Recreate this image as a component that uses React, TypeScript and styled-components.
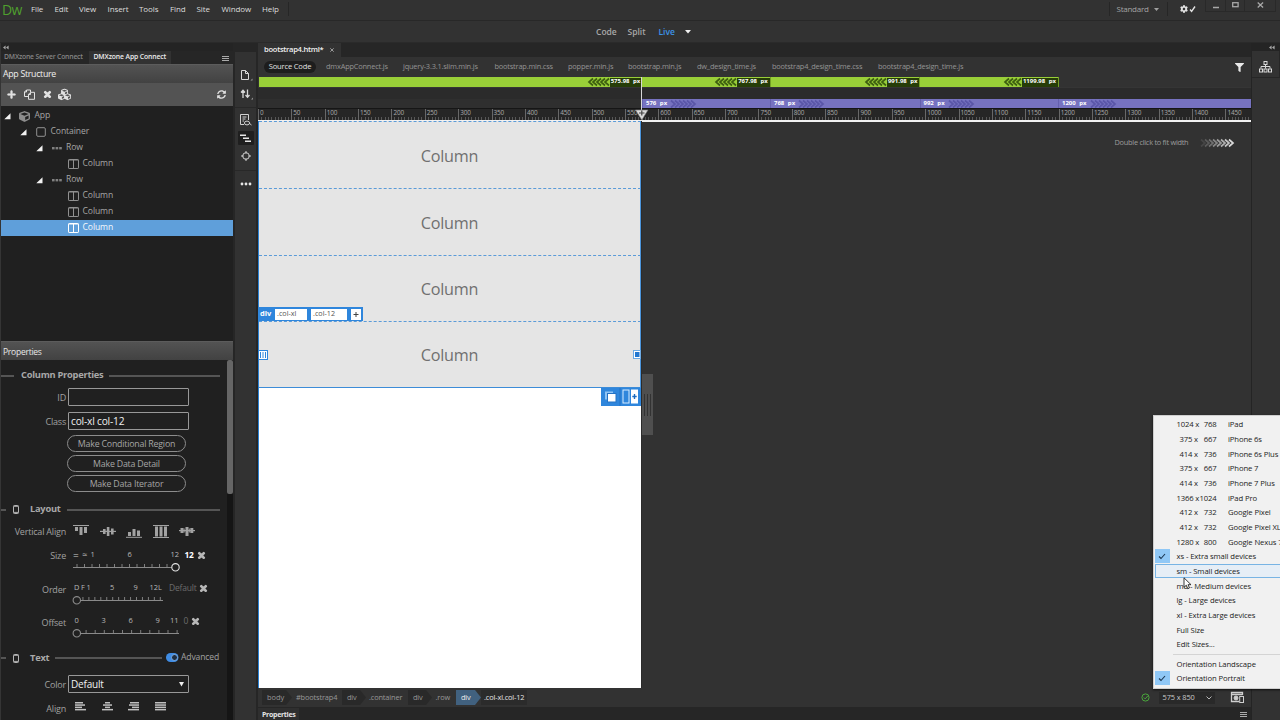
import React from "react";
import styled, { createGlobalStyle, css } from "styled-components";
import { FaCubes, FaCube, FaPlus, FaTimes, FaSyncAlt, FaFilter, FaCog } from "react-icons/fa";

const Global = createGlobalStyle`
  * { box-sizing: border-box; }
  html, body { margin: 0; padding: 0; overflow: hidden; background: #323232; }
  svg { display: block; flex: none; overflow: visible; }
`;

const Shell = styled.div`
  position: relative;
  width: 1280px;
  height: 720px;
  overflow: hidden;
  display: flex;
  flex-direction: column;
  background: #323232;
  color: #d0d0d0;
  font-family: "Open Sans", "Noto Sans", sans-serif;
  font-size: 8px;
  line-height: 1;
  white-space: nowrap;
`;

/* One run of text; $w reserves the distance to the next run. */
const Label = styled.span<{ $w?: number; $s?: number; $ls?: number; $c?: string; $b?: number; $a?: string }>`
  flex: none;
  display: block;
  ${(p) => p.$w !== undefined && css`width: ${p.$w}px;`}
  font-size: ${(p) => p.$s ?? 8}px;
  letter-spacing: ${(p) => p.$ls ?? 0}px;
  color: ${(p) => p.$c ?? "inherit"};
  font-weight: ${(p) => p.$b ?? 400};
  text-align: ${(p) => p.$a ?? "left"};
  line-height: 1.3;
`;

const Spacer = styled.div<{ $w?: number; $h?: number }>`
  flex: ${(p) => (p.$w === undefined && p.$h === undefined ? "1" : "none")};
  width: ${(p) => (p.$w === undefined ? "auto" : p.$w + "px")};
  height: ${(p) => (p.$h === undefined ? "auto" : p.$h + "px")};
`;

const MenuBar = styled.div`
  height: 21px;
  flex: none;
  display: flex;
  align-items: center;
  padding: 0 0 2px 2px;
  border-bottom: 1px solid #282828;
  color: #dcdcdc;
`;
const Logo = styled.div`
  width: 29px;
  color: #4f9f2e;
  font-size: 14px;
  letter-spacing: -0.6px;
  line-height: 17px;
`;
const Divider = styled.div`
  width: 1px;
  height: 14px;
  background: #262626;
`;
const WindowButtons = styled.div`
  display: flex;
  align-self: flex-start;
  height: 12px;
  border: 1px solid #292929;
  border-top: 0;
  margin-right: 4px;
`;
const WindowButton = styled.div<{ $w: number }>`
  width: ${(p) => p.$w}px;
  display: flex;
  align-items: center;
  justify-content: center;
  padding-bottom: 1px;
  & + & { border-left: 1px solid #292929; }
`;
const ViewBar = styled.div`
  height: 22px;
  flex: none;
  display: flex;
  align-items: center;
  padding-left: 596px;
  border-bottom: 1px solid #2a2a2a;
`;
const Main = styled.div`
  flex: 1;
  min-height: 0;
  display: flex;
`;

/* left panel */
const Panel = styled.div`
  width: 233px;
  flex: none;
  display: flex;
  flex-direction: column;
  background: #202020;
  border-left: 1px solid #353535;
`;
const Collapse = styled.div<{ $right?: boolean }>`
  height: 8px;
  flex: none;
  display: flex;
  align-items: center;
  justify-content: ${(p) => (p.$right ? "flex-end" : "flex-start")};
  padding: 0 5px 0 2px;
  background: #242424;
`;
const PanelTabs = styled.div`
  height: 13px;
  flex: none;
  display: flex;
  background: #262626;
  align-items: center;
`;
const PanelTab = styled.div<{ $active?: boolean; $w: number }>`
  width: ${(p) => p.$w}px;
  height: 13px;
  display: flex;
  align-items: center;
  padding-left: ${(p) => (p.$active ? 4.500 : 3)}px;
  background: ${(p) => (p.$active ? "#323232" : "transparent")};
`;
const PanelTitle = styled.div`
  height: 19px;
  flex: none;
  display: flex;
  align-items: center;
  padding: 1px 0 0 2px;
  background: linear-gradient(#535353, #424242);
  border-top: 1px solid #5c5c5c;
`;
const PanelTools = styled.div`
  height: 23px;
  flex: none;
  display: flex;
  align-items: center;
  padding: 0 7px 0 6px;
  background: #535353;
  color: #e2e2e2;
`;
const Tree = styled.div`
  height: 235px;
  flex: none;
  padding-top: 2px;
`;
const TreeRow = styled.div<{ $depth: number; $sel?: boolean }>`
  height: 16px;
  display: flex;
  align-items: center;
  padding-left: ${(p) => 3 + p.$depth * 16}px;
  background: ${(p) => (p.$sel ? "#5f9fda" : "transparent")};
  color: ${(p) => (p.$sel ? "#f4f8fc" : "#a6a6a6")};
`;
const Properties = styled.div`
  flex: 1;
  min-height: 0;
  display: flex;
`;
const PropList = styled.div`
  width: 226px;
  overflow: hidden;
  display: flex;
  flex-direction: column;
`;
const ScrollTrack = styled.div`
  width: 6px;
  background: #151515;
`;
const ScrollThumb = styled.div`
  height: 134px;
  border-radius: 2px;
  background: #666;
`;
const SectionRow = styled.div<{ $h: number; $t?: number }>`
  height: ${(p) => p.$h}px;
  padding-top: ${(p) => p.$t ?? 0}px;
  flex: none;
  display: flex;
  align-items: center;
`;
const Rule = styled.div<{ $w: number }>`
  width: ${(p) => p.$w}px;
  height: 2px;
  background: #555;
`;
const PropRow = styled.div<{ $h: number }>`
  height: ${(p) => p.$h}px;
  flex: none;
  display: flex;
  align-items: center;
`;
const PropLabel = styled.div`
  width: 65px;
  margin-right: 2px;
  text-align: right;
  font-size: 9px;
  letter-spacing: -0.2px;
  color: #a0a0a0;
  flex: none;
`;
const Field = styled.div`
  width: 121px;
  height: 18px;
  border: 1px solid #989898;
  border-radius: 1px;
  display: flex;
  align-items: center;
  justify-content: space-between;
  padding: 1px 4px 0 2px;
  color: #f0f0f0;
`;
const PillButton = styled.div`
  width: 119px;
  height: 17px;
  margin: 0 0 3px 66px;
  flex: none;
  border: 1px solid #8c8c8c;
  border-radius: 9px;
  display: flex;
  align-items: center;
  justify-content: center;
  color: #a6a6a6;
  padding-top: 2px;
`;
const ScaleBox = styled.div`
  display: flex;
  flex-direction: column;
  gap: 1px;
  color: #b8b8b8;
`;
const ScaleLabels = styled.div`
  display: flex;
  align-items: center;
  height: 11px;
`;

/* vertical tool rail */
const Rail = styled.div`
  width: 25px;
  flex: none;
  padding: 9px 2px 0 2px;
  background: #262626;
`;
const RailInner = styled.div`
  height: 100%;
  background: #323232;
  display: flex;
  flex-direction: column;
  align-items: center;
  padding-top: 15px;
  color: #d8d8d8;
`;
const RailTool = styled.div<{ $h: number; $active?: boolean }>`
  width: 16px;
  height: ${(p) => p.$h}px;
  flex: none;
  display: flex;
  align-items: center;
  justify-content: center;
  border-radius: 1px;
  background: ${(p) => (p.$active ? "#1f1f1f" : "transparent")};
`;
const RailLine = styled.div`
  width: 100%;
  height: 1px;
  background: #282828;
`;

/* document */
const Doc = styled.div`
  width: 993px;
  flex: none;
  display: flex;
  flex-direction: column;
`;
const DocTabs = styled.div`
  height: 14px;
  flex: none;
  background: #262626;
`;
const DocTab = styled.div`
  width: 83px;
  height: 14px;
  background: #323232;
  display: flex;
  align-items: center;
  padding-left: 6px;
`;
const FilesBar = styled.div`
  height: 20px;
  flex: none;
  display: flex;
  align-items: center;
  color: #949494;
  padding-left: 6px;
`;
const SourcePill = styled.div`
  width: 52px;
  height: 12px;
  border-radius: 6px;
  background: #1d1d1d;
  color: #e2e2e2;
  display: flex;
  align-items: center;
  justify-content: center;
  margin-right: 10px;
`;
const MaxBar = styled.div`
  height: 10px;
  flex: none;
  display: flex;
  padding-left: 1px;
`;
const MaxSegment = styled.div<{ $w: number }>`
  width: ${(p) => p.$w}px;
  height: 10px;
  display: flex;
  align-items: center;
  justify-content: flex-end;
  background: #99cf38;
  border-right: 1px solid #73a024;
`;
const MaxLabel = styled.div<{ $w: number }>`
  width: ${(p) => p.$w}px;
  height: 9px;
  background: #263d08;
  color: #fff;
  display: flex;
  align-items: center;
  justify-content: center;
  word-spacing: 2px;
`;
const GapBar = styled.div`
  height: 12px;
  flex: none;
  background: #2b2b2b;
  border-top: 1px solid #353535;
`;
const MinBar = styled.div`
  height: 9px;
  flex: none;
  display: flex;
  padding-left: 384px;
  background: #2f2f2f;
`;
const MinSegment = styled.div<{ $w: number }>`
  width: ${(p) => p.$w}px;
  display: flex;
  align-items: center;
  background: #7672c0;
  border-left: 1px solid #6460ae;
  color: #fff;
  padding-left: 3px;
  word-spacing: 2px;
`;
const Ruler = styled.div`
  height: 12px;
  flex: none;
  display: flex;
  overflow: hidden;
  background: #262626;
  border-top: 1px solid #161616;
`;
const RulerCell = styled.div`
  width: 33.36px;
  height: 11px;
  flex: none;
  border-left: 1px solid #686868;
  padding-left: 1px;
  color: #aaa;
  background: repeating-linear-gradient(to right, #585858 0 1px, transparent 1px 3.336px) -1px 8px / 100% 3px no-repeat;
  & > span { line-height: 7px; }
`;
const RulerLine = styled.div`
  height: 1px;
  flex: none;
  background: #f2f2f2;
`;
const Stage = styled.div`
  flex: 1;
  min-height: 0;
  display: flex;
`;
const StageRest = styled.div`
  flex: 1;
  display: flex;
  align-items: flex-start;
  border-top: 1px solid #f2f2f2;
`;
const PageView = styled.div`
  position: relative;
  width: 384px;
  height: 567px;
  background: #fff;
  border-left: 1px solid #2b83d6;
  border-right: 1px solid #2b2b2b;
`;
const Block = styled.div<{ $h: number; $sel?: boolean }>`
  height: ${(p) => p.$h}px;
  padding-top: 3px;
  background: #e5e5e5;
  border-top: 1px dashed #5b9bd8;
  border-right: 1px solid #4c95dc;
  ${(p) => p.$sel && css`border-bottom: 1px solid #3d8cd8;`}
  display: flex;
  align-items: center;
  justify-content: center;
  color: #707070;
`;
const TagBadge = styled.div`
  position: absolute;
  left: -1px;
  top: 186px;
  width: 105px;
  height: 14px;
  padding: 0 2px;
  background: #2f86dc;
  display: flex;
  align-items: center;
  color: #fff;
`;
const TagChip = styled.div<{ $w: number; $m: number }>`
  width: ${(p) => p.$w}px;
  height: 11px;
  margin-right: ${(p) => p.$m}px;
  background: #fff;
  color: #555;
  display: flex;
  align-items: center;
  padding-left: 2px;
`;
const Handle = styled.div<{ $x: number }>`
  position: absolute;
  left: ${(p) => p.$x}px;
  top: 229px;
`;
const ActionBadge = styled.div`
  position: absolute;
  left: 342px;
  top: 267px;
`;
const DragGrip = styled.div`
  width: 11px;
  height: 61px;
  margin-top: 252px;
  background: #4f4f4f;
  display: flex;
  align-items: center;
  justify-content: center;
  gap: 2px;
`;
const GripLine = styled.div`
  width: 1px;
  height: 22px;
  background: #333;
`;
const Hint = styled.div`
  margin: 14px 17px 0 auto;
  height: 14px;
  display: flex;
  align-items: center;
  color: #9c9c9c;
`;
const Crumbs = styled.div`
  height: 20px;
  flex: none;
  display: flex;
  align-items: center;
  padding-left: 4px;
  color: #989898;
  border-bottom: 1px solid #262626;
`;
const Crumb = styled.div<{ $w: number; $bg?: string; $arrow?: boolean; $c?: string; $p?: number }>`
  width: ${(p) => p.$w}px;
  height: 15px;
  flex: none;
  display: flex;
  align-items: center;
  padding-left: ${(p) => p.$p ?? 5}px;
  background: ${(p) => p.$bg ?? "transparent"};
  color: ${(p) => p.$c ?? "inherit"};
  ${(p) => p.$arrow && css`clip-path: polygon(0 0, calc(100% - 6px) 0, 100% 50%, calc(100% - 6px) 100%, 0 100%);`}
`;
const SizeSelect = styled.div`
  width: 56px;
  height: 12px;
  background: #292929;
  color: #c9c9c9;
  display: flex;
  align-items: center;
  justify-content: space-between;
  padding: 0 3px 0 4px;
  margin-right: 16px;
`;
const BottomPanel = styled.div`
  height: 12px;
  flex: none;
  background: #262626;
  display: flex;
  align-items: center;
  justify-content: space-between;
  padding-right: 4px;
`;
const BottomTab = styled.div`
  width: 41px;
  height: 12px;
  background: #2f2f2f;
  padding: 2px 0 0 4px;
`;

const RightRail = styled.div`
  flex: 1;
  border-left: 1px solid #242424;
  display: flex;
  flex-direction: column;
`;
const RightTool = styled.div`
  height: 27px;
  display: flex;
  align-items: center;
  justify-content: center;
  border-bottom: 1px solid #262626;
  border-right: 1px solid #262626;
  padding-top: 5px;
`;

/* size menu */
const Menu = styled.div`
  position: absolute;
  left: 1153px;
  top: 415px;
  width: 140px;
  height: 274px;
  padding: 1px 0 0 1px;
  background: #f1f1f1;
  border: 1px solid #cfcfcf;
  box-shadow: 0 1px 2px #111;
  color: #1c1c1c;
`;
const MenuItem = styled.div<{ $hover?: boolean }>`
  height: 14.67px;
  display: flex;
  align-items: center;
  background: ${(p) => (p.$hover ? "#e6eef6" : "transparent")};
  outline: ${(p) => (p.$hover ? "1px solid #78b4e4" : "none")};
  outline-offset: -1px;
`;
const CheckCell = styled.div<{ $on?: boolean }>`
  width: 14.500px;
  height: 14px;
  margin-right: 7px;
  display: flex;
  align-items: center;
  justify-content: center;
  background: ${(p) => (p.$on ? "#90c8f6" : "transparent")};
`;
const MenuLine = styled.div`
  height: 1px;
  margin: 2px 0 2px 18px;
  background: #d4d4d4;
`;
const Pointer = styled.div`
  position: absolute;
  left: 1183px;
  top: 577px;
`;
const MarkerBox = styled.div`
  position: absolute;
  left: 635px;
  top: 77px;
`;

const Hamburger = () => (
  <svg width="7" height="6"><path d="M0 1.500h7M0 3.500h7M0 5.500h7" stroke="#aaa" strokeWidth="1" /></svg>
);
const DoubleLeft = () => (
  <svg width="6" height="5" fill="#a8a8a8"><path d="M2.600 .5v4L0 2.500zM5.600 .5v4L3 2.500z" /></svg>
);
const Expander = () => (
  <svg width="7" height="7"><path d="M6.500 .2v6H.3z" fill="#f2f2f2" /></svg>
);
const Chevrons = ({ n, left, color, fade, h = 8, step = 4 }: { n: number; left?: boolean; color: string; fade?: boolean; h?: number; step?: number }) => (
  <svg width={n * step + 2} height={h} fill="none" stroke={color} strokeWidth="1.700">
    {Array.from({ length: n }, (_, i) => (
      <path
        key={i}
        opacity={fade ? (i + 1) / n : 1}
        d={left ? `M${i * step + 5} .5L${i * step + 1} ${h / 2}l4 ${h / 2 - 0.5}` : `M${i * step + 1} .5l4 ${h / 2 - 0.5}l-4 ${h / 2 - 0.5}`}
      />
    ))}
  </svg>
);
const Phone = () => (
  <svg width="6" height="9" fill="none" stroke="#b4b4b4"><rect x=".5" y=".5" width="5" height="8" rx=".8" /><path d="M1 1.300h4M1 7.400h4" /></svg>
);
const ColumnIcon = ({ c }: { c: string }) => (
  <svg width="11" height="10" fill="none" stroke={c}><rect x=".5" y=".5" width="10" height="9" rx=".6" /><path d="M5.500 .5v9" /><path d="M.5 1.500h10" strokeOpacity=".5" /></svg>
);
const ClearIcon = () => <FaTimes size={9} color="#b8b8b8" stroke="#b8b8b8" strokeWidth={60} />;

const menus: [string, number][] = [["File", 23.5], ["Edit", 24.5], ["View", 28.5], ["Insert", 31.5], ["Tools", 31], ["Find", 26.5], ["Site", 25], ["Window", 40.5], ["Help", 26]];

const files: [string, number][] = [
  ["dmxAppConnect.js", 77], ["jquery-3.3.1.slim.min.js", 91.5], ["bootstrap.min.css", 73.5], ["popper.min.js", 60],
  ["bootstrap.min.js", 69], ["dw_design_time.js", 75], ["bootstrap4_design_time.css", 106], ["bootstrap4_design_time.js", 90],
];

type Kind = "app" | "container" | "row" | "col";
const tree: [Kind, string, number, boolean?][] = [
  ["app", "App", 0], ["container", "Container", 1], ["row", "Row", 2], ["col", "Column", 3],
  ["row", "Row", 2], ["col", "Column", 3], ["col", "Column", 3], ["col", "Column", 3, true],
];

const TreeIcon = ({ kind, sel }: { kind: Kind; sel?: boolean }) => {
  if (kind === "app") return <FaCube size={11} color="#8c8c8c" />;
  if (kind === "container") return <svg width="10" height="10" fill="none" stroke="#909090"><rect x=".7" y=".7" width="8.600" height="8.600" rx="1.200" /></svg>;
  if (kind === "row") return <svg width="10" height="4" fill="#808080"><rect x="0" y="1" width="2.600" height="2.400" /><rect x="3.600" y="1" width="2.600" height="2.400" /><rect x="7.200" y="1" width="2.600" height="2.400" /></svg>;
  return <ColumnIcon c={sel ? "#fff" : "#909090"} />;
};

const Slider = ({ w, step, first, count, knob, bright }: { w: number; step: number; first: number; count: number; knob: number; bright?: boolean }) => (
  <svg width={w + 6} height="10" fill="none" stroke="#8a8a8a">
    <path d={`M0 5.500H${w}`} />
    {Array.from({ length: count }, (_, i) => <path key={i} d={`M${first + i * step} 2v3`} strokeWidth=".9" />)}
    <circle cx={knob} cy="5.300" r="3.700" fill="#202020" stroke={bright ? "#e4e4e4" : "#8a8a8a"} strokeWidth="1.100" />
  </svg>
);

/* Vertical alignment glyphs: [x, y, width, height] bars on a 16x13 grid. */
const vAligns: number[][][] = [
  [[0, 0, 16, 1], [2, 2, 3, 4], [6.5, 2, 3, 8], [11, 2, 3, 6]],
  [[0, 5.8, 16, 1.2], [3, 4, 2.6, 5], [6.8, 2, 2.6, 9], [11, 3.5, 2.6, 6]],
  [[0, 11.8, 16, 1], [2, 7, 3, 4], [6.5, 4, 3, 7], [11, 5.5, 3, 5.5]],
  [[0, 0, 16, 1], [2, 1.5, 3, 10], [6.5, 1.5, 3, 10], [11, 1.5, 3, 10], [0, 12, 16, 1]],
  [[0, 5, 16, 1.2], [1.5, 3, 3, 5], [6.5, 2, 3, 9], [11.3, 3, 3, 5], [4.6, 3.5, 1, 4], [9.8, 3.5, 1, 4]],
];

/* Text alignment glyphs: [x, width] of each of the four lines. */
const aligns = [[[0, 8], [0, 10], [0, 7], [0, 11]], [[3, 5], [1, 9], [3, 5], [0, 11]], [[2, 9], [1, 10], [4, 7], [0, 11]], [[0, 11], [0, 11], [0, 11], [0, 11]]];

const devices: [string, string, string][] = [
  ["1024 x", "768", "iPad"], ["375 x", "667", "iPhone 6s"], ["414 x", "736", "iPhone 6s Plus"], ["375 x", "667", "iPhone 7"],
  ["414 x", "736", "iPhone 7 Plus"], ["1366 x", "1024", "iPad Pro"], ["412 x", "732", "Google Pixel"], ["412 x", "732", "Google Pixel XL"], ["1280 x", "800", "Google Nexus 7"],
];
const sizes = ["xs - Extra small devices", "sm - Small devices", "md - Medium devices", "lg - Large devices", "xl - Extra Large devices", "Full Size", "Edit Sizes..."];
const Tick = () => <svg width="8" height="7" fill="none" stroke="#1a3550" strokeWidth="1.100"><path d="M1 3.500l2 2L7 1" /></svg>;

function Marker() {
  return (
    <MarkerBox>
      <svg width="14" height="44">
        <path d="M6.500 0v34" stroke="#d8d8d8" />
        <path d="M.5 33h12.500L6.800 43z" fill="#dcdcdc" stroke="#777" strokeWidth=".6" />
        <path d="M4 36h5.500M6.800 33.500v5" stroke="#444" strokeWidth="1.200" />
      </svg>
    </MarkerBox>
  );
}

export default function App() {
  return (
    <Shell>
      <Global />
      <MenuBar>
        <Logo>Dw</Logo>
        {menus.map(([t, w]) => <Label key={t} $w={w} $s={8} $ls={-0.1}>{t}</Label>)}
        <Divider />
        <Spacer />
        <Divider />
        <Spacer $w={7} />
        <Label $w={37.5} $ls={-0.25} $c="#a4a4a4">Standard</Label>
        <svg width="5" height="3" fill="#a0a0a0"><path d="M0 0h5L2.500 3z" /></svg>
        <Spacer $w={8} />
        <Divider />
        <Spacer $w={12} />
        <FaCog size={8} color="#e2e2e2" />
        <svg width="8" height="8" fill="none" stroke="#e2e2e2" strokeWidth="1.400"><path d="M2 4.500l1.600 1.800L7 1.500" /></svg>
        <Spacer $w={9} />
        <WindowButtons>
          <WindowButton $w={19}><svg width="8" height="8"><path d="M1 6.500h6" stroke="#a8a8a8" strokeWidth="1.500" /></svg></WindowButton>
          <WindowButton $w={19}><svg width="7" height="6" fill="none" stroke="#a8a8a8" strokeWidth="1.300"><rect x=".7" y=".7" width="5.400" height="4" /></svg></WindowButton>
          <WindowButton $w={31}><svg width="7" height="6" stroke="#a8a8a8" strokeWidth="1.300"><path d="M.7 .5l5.400 5M6.100 .5l-5.400 5" /></svg></WindowButton>
        </WindowButtons>
      </MenuBar>
      <ViewBar>
        <Label $w={31.5} $s={8.5} $b={600} $c="#a8a8a8">Code</Label>
        <Label $w={31} $s={8.5} $b={600} $c="#a8a8a8">Split</Label>
        <Label $w={26} $s={8.5} $b={600} $c="#3d94e8">Live</Label>
        <svg width="6" height="4" fill="#f0f0f0"><path d="M0 0h6L3 3.600z" /></svg>
      </ViewBar>
      <Main>
        <Panel>
          <Collapse><DoubleLeft /></Collapse>
          <PanelTabs>
            <PanelTab $w={88}><Label $s={6.8} $b={600} $ls={-0.18} $c="#858585">DMXzone Server Connect</Label></PanelTab>
            <PanelTab $w={82} $active><Label $s={6.8} $b={600} $ls={-0.11} $c="#ececec">DMXzone App Connect</Label></PanelTab>
            <Spacer />
            <Hamburger />
            <Spacer $w={4} />
          </PanelTabs>
          <PanelTitle><Label $s={8.8} $ls={-0.3} $c="#f0f0f0">App Structure</Label></PanelTitle>
          <PanelTools>
            <FaPlus size={9} stroke="#e2e2e2" strokeWidth={30} />
            <Spacer $w={8} />
            <svg width="11" height="11" fill="none" stroke="#e2e2e2" strokeWidth="1"><path d="M4.500 7.500h-4v-4.500l2-2h4v2M.5 3h2v-2M4.500 5.300l2-2h4v7h-6zM4.500 5.500h2v-2" /></svg>
            <Spacer $w={8} />
            <FaTimes size={9} stroke="#e2e2e2" strokeWidth={60} />
            <Spacer $w={6} />
            <FaCubes size={13} />
            <Spacer />
            <FaSyncAlt size={9} />
          </PanelTools>
          <Tree>
            {tree.map(([k, t, d, sel], i) => (
              <TreeRow key={i} $depth={d} $sel={sel}>
                {k === "col" ? <Spacer $w={16} /> : <><Expander /><Spacer $w={k === "app" ? 8 : 9} /></>}
                <TreeIcon kind={k} sel={sel} />
                <Spacer $w={k === "app" || k === "container" ? 4.5 : k === "row" ? 4 : 3.5} />
                <Label $s={8.6} $ls={-0.1}>{t}</Label>
              </TreeRow>
            ))}
          </Tree>
          <PanelTitle><Label $s={8.5} $ls={-0.25} $c="#e8e8e8">Properties</Label></PanelTitle>
          <Properties>
            <PropList>
              <SectionRow $h={28} $t={3}>
                <Rule $w={13} /><Spacer $w={7} />
                <Label $w={88} $s={9.3} $b={700} $ls={-0.25} $c="#a8a8a8">Column Properties</Label>
                <Rule $w={111} />
              </SectionRow>
              <PropRow $h={18}><PropLabel>ID</PropLabel><Field /></PropRow>
              <Spacer $h={6} />
              <PropRow $h={18}><PropLabel>Class</PropLabel><Field><Label $s={10.2} $ls={-0.2}>col-xl col-12</Label></Field></PropRow>
              <Spacer $h={5} />
              <PillButton><Label $s={8.8} $ls={-0.2}>Make Conditional Region</Label></PillButton>
              <PillButton><Label $s={8.8} $ls={-0.2}>Make Data Detail</Label></PillButton>
              <PillButton><Label $s={8.8} $ls={-0.2}>Make Data Iterator</Label></PillButton>
              <SectionRow $h={28} $t={1}>
                <Rule $w={5} /><Spacer $w={7} /><Phone /><Spacer $w={11} />
                <Label $w={37} $s={9.3} $b={700} $ls={-0.25} $c="#a8a8a8">Layout</Label>
                <Rule $w={153} />
              </SectionRow>
              <PropRow $h={16}>
                <PropLabel>Vertical Align</PropLabel>
                <Spacer $w={5} />
                {vAligns.map((bars, i) => (
                  <React.Fragment key={i}>
                    <svg width="16" height="13" fill="#a2a2a2">{bars.map(([x, y, w, h], j) => <rect key={j} x={x} y={y} width={w} height={h} />)}</svg>
                    <Spacer $w={10.6} />
                  </React.Fragment>
                ))}
              </PropRow>
              <Spacer $h={10} />
              <PropRow $h={23}>
                <PropLabel>Size<Spacer $h={10} /></PropLabel>
                <Spacer $w={5} />
                <ScaleBox>
                  <ScaleLabels>
                    <Label $w={9} $s={10} $c="#ccc">=</Label><Label $w={8.5} $s={9}>≈</Label><Label $w={37} $s={7.5}>1</Label>
                    <Label $w={43} $s={7.5}>6</Label><Label $w={14} $s={7.5}>12</Label>
                    <Label $w={12} $s={8.4} $b={700} $c="#fff" $ls={-0.3}>12</Label>
                    <ClearIcon />
                  </ScaleLabels>
                  <Slider w={99} step={7.5} first={4} count={13} knob={102.5} bright />
                </ScaleBox>
              </PropRow>
              <Spacer $h={10} />
              <PropRow $h={23}>
                <PropLabel>Order<Spacer $h={9} /></PropLabel>
                <Spacer $w={5} />
                <ScaleBox>
                  <ScaleLabels>
                    <Spacer $w={1} />
                    <Label $w={7} $s={7.4}>D</Label><Label $w={5.5} $s={7.4}>F</Label><Label $w={23.5} $s={7.4}>1</Label>
                    <Label $w={23.5} $s={7.4}>5</Label><Label $w={16} $s={7.4}>9</Label><Label $w={19.5} $s={7.4}>12L</Label>
                    <Label $w={30} $s={8.5} $ls={-0.2} $c="#6c6c6c">Default</Label>
                    <ClearIcon />
                  </ScaleLabels>
                  <Slider w={90} step={5.95} first={4} count={15} knob={3.8} />
                </ScaleBox>
              </PropRow>
              <Spacer $h={10} />
              <PropRow $h={23}>
                <PropLabel>Offset<Spacer $h={9} /></PropLabel>
                <Spacer $w={5} />
                <ScaleBox>
                  <ScaleLabels>
                    <Spacer $w={1.5} />
                    <Label $w={27} $s={7.5}>0</Label><Label $w={27} $s={7.5}>3</Label><Label $w={27} $s={7.5}>6</Label>
                    <Label $w={14.5} $s={7.5}>9</Label><Label $w={13.5} $s={7.5}>11</Label>
                    <Label $w={7.5} $s={8.5} $c="#6c6c6c">0</Label>
                    <ClearIcon />
                  </ScaleLabels>
                  <Slider w={106} step={9.1} first={4} count={12} knob={3.8} />
                </ScaleBox>
              </PropRow>
              <Spacer $h={5} />
              <SectionRow $h={30}>
                <Rule $w={5} /><Spacer $w={7} /><Phone /><Spacer $w={11} />
                <Label $w={25} $s={9.3} $b={700} $ls={-0.25} $c="#a8a8a8">Text</Label>
                <Rule $w={107} />
                <Spacer $w={4} />
                <svg width="13" height="10"><rect x="0" y="0" width="12.500" height="9" rx="4.500" fill="#3f8ce4" /><circle cx="8.500" cy="4.500" r="3" fill="#1f2f42" stroke="#8fbcf0" strokeWidth=".8" /></svg>
                <Spacer $w={2} />
                <Label $s={8.6} $ls={-0.15} $c="#a2a2a2">Advanced</Label>
              </SectionRow>
              <Spacer $h={2} />
              <PropRow $h={18}><PropLabel>Color</PropLabel><Field><Label $s={10} $ls={-0.2}>Default</Label><svg width="5" height="5" fill="#eee"><path d="M0 0h5L2.500 4.500z" /></svg></Field></PropRow>
              <Spacer $h={6} />
              <PropRow $h={14}>
                <PropLabel><Spacer $h={4} />Align</PropLabel>
                <Spacer $w={7} />
                {aligns.map((rows, i) => (
                  <React.Fragment key={i}>
                    <svg width="11" height="9" fill="#c0c0c0">{rows.map(([x, w], j) => <rect key={j} x={x} y={j * 2.3} width={w} height="1.500" />)}</svg>
                    <Spacer $w={15.7} />
                  </React.Fragment>
                ))}
              </PropRow>
            </PropList>
            <ScrollTrack><ScrollThumb /></ScrollTrack>
          </Properties>
        </Panel>
        <Rail>
          <RailInner>
            <RailTool $h={16}><svg width="11" height="10" fill="none" stroke="#d8d8d8"><path d="M1.500 .5h4l3 3v6h-7zM5.500 .5v3h3" /><path d="M12.500 8.500v2h-2z" fill="#999" stroke="none" /></svg></RailTool>
            <Spacer $h={3} />
            <RailTool $h={16}><svg width="12" height="10" fill="none" stroke="#d8d8d8" strokeWidth="1.300"><path d="M3 9V1.500M1 3.500l2-2.200 2 2.200M7.500 .5V8M5.500 6l2 2.200 2-2.200" /><path d="M13 8.500v2h-2z" fill="#999" stroke="none" /></svg></RailTool>
            <Spacer $h={5} /><RailLine /><Spacer $h={4} />
            <RailTool $h={16}><svg width="13" height="12" fill="none" stroke="#d0d0d0"><path d="M5 10.500H1.500V.5h8V6M3.500 3h4M3.500 5h3M3.500 7h1.500" /><ellipse cx="8" cy="9" rx="2.600" ry="1.900" /><path d="M10 9l2.500 2" /></svg></RailTool>
            <Spacer $h={3} />
            <RailTool $h={14} $active><svg width="11" height="9" stroke="#e6e6e6" strokeWidth="1.500"><path d="M0 1.200h6M3 4.200h6M5 7.200h6" /></svg></RailTool>
            <Spacer $h={4} />
            <RailTool $h={14}><svg width="10" height="10" fill="none" stroke="#d0d0d0"><circle cx="5" cy="5" r="3.300" /><path d="M5 0v2.500M5 7.500V10M0 5h2.500M7.500 5H10" /></svg></RailTool>
            <Spacer $h={7} /><RailLine /><Spacer $h={5} />
            <RailTool $h={16}><svg width="12" height="4" fill="#e8e8e8"><circle cx="2" cy="2" r="1.400" /><circle cx="6" cy="2" r="1.400" /><circle cx="10" cy="2" r="1.400" /></svg></RailTool>
          </RailInner>
        </Rail>
        <Doc>
          <DocTabs>
            <DocTab>
              <Label $w={65.5} $s={7.6} $b={600} $c="#f0f0f0" $ls={-0.28}>bootstrap4.html*</Label>
              <svg width="4" height="4" stroke="#9a9a9a"><path d="M.3 .3l3.400 3.400M3.700 .3L.3 3.700" /></svg>
            </DocTab>
          </DocTabs>
          <FilesBar>
            <SourcePill><Label $s={7.6} $ls={-0.2}>Source Code</Label></SourcePill>
            {files.map(([f, w]) => <Label key={f} $w={w} $s={7.4} $ls={-0.19}>{f}</Label>)}
            <Spacer />
            <FaFilter size={9} color="#e8e8e8" />
            <Spacer $w={7.5} />
          </FilesBar>
          <MaxBar>
            {([[383, 31, "575.98 px", 5], [128.5, 33, "767.98 px", 5], [149.5, 32.5, "991.98 px", 5], [138.5, 36, "1199.98 px", 4]] as [number, number, string, number][]).map(([w, lw, t, n]) => (
              <MaxSegment key={t} $w={w}>
                <Chevrons n={n} left color="#3d5f10" />
                <MaxLabel $w={lw}><Label $s={6} $b={700}>{t}</Label></MaxLabel>
              </MaxSegment>
            ))}
          </MaxBar>
          <GapBar />
          <MinBar>
            {([[128, "576 px"], [149.5, "768 px"], [138.5, "992 px"], [193, "1200 px"]] as [number, string][]).map(([w, t]) => (
              <MinSegment key={t} $w={w}><Label $s={6} $b={700}>{t}</Label><Spacer $w={3} /><Chevrons n={6} color="#5a56a8" /></MinSegment>
            ))}
          </MinBar>
          <Ruler>
            {Array.from({ length: 30 }, (_, i) => <RulerCell key={i}><Label $s={6.4} $ls={-0.15}>{i * 50}</Label></RulerCell>)}
          </Ruler>
          <RulerLine />
          <Stage>
            <PageView>
              {[67, 66.5, 66.5].map((h, i) => <Block key={i} $h={h}><Label $s={16.2} $ls={-0.2}>Column</Label></Block>)}
              <Block $h={67} $sel><Label $s={16.2} $ls={-0.2}>Column</Label></Block>
              <TagBadge>
                <Label $w={15} $s={7.5} $b={700}>div</Label>
                <TagChip $w={32} $m={4}><Label $s={7.2}>.col-xl</Label></TagChip>
                <TagChip $w={36} $m={4}><Label $s={7.2}>.col-12</Label></TagChip>
                <TagChip $w={10} $m={0}><svg width="6" height="7" stroke="#444"><path d="M3 1v5M.5 3.500h5" /></svg></TagChip>
              </TagBadge>
              <Handle $x={-1}><svg width="10" height="10" stroke="#2f86dc"><rect x=".5" y=".5" width="9" height="9" fill="#fff" /><path d="M2.500 2v6M5 2v6M7.500 2v6" /></svg></Handle>
              <Handle $x={374}><svg width="8" height="9"><rect x=".5" y=".5" width="7" height="8" fill="#fff" stroke="#6caae4" /><rect x="2" y="2" width="4.500" height="5" fill="#2277d0" /></svg></Handle>
              <ActionBadge>
                <svg width="40" height="18">
                  <rect width="40" height="18" fill="#2f86dc" />
                  <rect x="4" y="3.500" width="8" height="8" fill="#8ec3f4" />
                  <rect x="6.500" y="5.500" width="8.500" height="8.500" fill="#fff" stroke="#2472c4" />
                  <path d="M19 0v18" stroke="#2472c4" />
                  <rect x="22" y="2" width="6" height="13" fill="#2f86dc" stroke="#d8ecff" />
                  <rect x="30" y="1.500" width="7" height="14" fill="#fff" />
                  <path d="M33.500 6v5M31.300 8.500h4.400" stroke="#1d6cc0" strokeWidth="1.400" />
                </svg>
              </ActionBadge>
            </PageView>
            <StageRest>
              <DragGrip><GripLine /><GripLine /><GripLine /></DragGrip>
              <Hint><Label $w={85.5} $s={7.4} $ls={-0.27}>Double click to fit width</Label><Chevrons n={8} color="#d8d8d8" fade /></Hint>
            </StageRest>
          </Stage>
          <Crumbs>
            <Crumb $w={30} $bg="#292929" $arrow><Label $s={7.4}>body</Label></Crumb>
            <Crumb $w={50} $p={4}><Label $s={7.4} $ls={-0.15}>#bootstrap4</Label></Crumb>
            <Crumb $w={24} $bg="#292929" $arrow><Label $s={7.4} $ls={-0.15}>div</Label></Crumb>
            <Crumb $w={42} $p={3}><Label $s={7.4} $ls={-0.15}>.container</Label></Crumb>
            <Crumb $w={24} $bg="#292929" $arrow><Label $s={7.4} $ls={-0.15}>div</Label></Crumb>
            <Crumb $w={24} $p={3.5}><Label $s={7.4} $ls={-0.15}>.row</Label></Crumb>
            <Crumb $w={25} $bg="#41617f" $c="#eee" $arrow><Label $s={7.4} $ls={-0.15}>div</Label></Crumb>
            <Crumb $w={46} $p={3} $bg="#2b2b2b" $c="#e4e4e4"><Label $s={7.4} $ls={-0.15}>.col-xl.col-12</Label></Crumb>
            <Spacer />
            <svg width="9" height="9" fill="none" stroke="#4aa83c"><circle cx="4.500" cy="4.500" r="3.600" /><path d="M2.800 4.500l1.400 1.400 2.600-3" /></svg>
            <Spacer $w={9} />
            <SizeSelect><Label $s={7.4} $ls={-0.1}>575 x 850</Label><svg width="6" height="4" fill="none" stroke="#b8b8b8"><path d="M.5 .5L3 3 5.500 .5" /></svg></SizeSelect>
            <svg width="13" height="11" fill="none" stroke="#cfcfcf"><path d="M8 9.500H.5v-9h11V3M.5 2.500h11" strokeWidth="1.300" /><circle cx="5" cy="6" r="2" fill="#cfcfcf" /><rect x="8.700" y="4.500" width="3.800" height="6" fill="#323232" /></svg>
            <Spacer $w={7.5} />
          </Crumbs>
          <BottomPanel><BottomTab><Label $s={7} $b={700} $ls={-0.3} $c="#e4e4e4">Properties</Label></BottomTab><Hamburger /></BottomPanel>
        </Doc>
        <RightRail>
          <Collapse $right><DoubleLeft /></Collapse>
          <RightTool><svg width="13" height="12" fill="none" stroke="#d8d8d8"><rect x="5" y=".5" width="3" height="3" /><path d="M6.500 3.500v4M2 7.500v-2h9v2" /><rect x=".5" y="8" width="3" height="3" /><rect x="5" y="8" width="3" height="3" /><rect x="9.500" y="8" width="3" height="3" /></svg></RightTool>
        </RightRail>
      </Main>
      <Marker />
      <Menu>
        {devices.map(([a, b, c], i) => (
          <MenuItem key={i}>
            <CheckCell />
            <Label $w={21.5} $a="right" $s={7.7} $ls={-0.15}>{a}</Label>
            <Label $w={18.5} $a="right" $s={7.7} $ls={-0.15}>{b}</Label>
            <Spacer $w={11.5} />
            <Label $s={7.7} $ls={-0.12}>{c}</Label>
          </MenuItem>
        ))}
        {sizes.map((t, i) => (
          <MenuItem key={t} $hover={i === 1}>
            <CheckCell $on={i === 0}>{i === 0 && <Tick />}</CheckCell>
            <Label $s={7.7} $ls={-0.1}>{t}</Label>
          </MenuItem>
        ))}
        <MenuLine />
        <MenuItem><CheckCell /><Label $s={7.7} $ls={-0.1}>Orientation Landscape</Label></MenuItem>
        <MenuItem><CheckCell $on><Tick /></CheckCell><Label $s={7.7} $ls={-0.1}>Orientation Portrait</Label></MenuItem>
      </Menu>
      <Pointer>
        <svg width="9" height="13"><path d="M1 .8v9.500l2.300-2 1.500 3.400 1.700-.8L5 7.700h3z" fill="#fff" stroke="#222" strokeWidth=".9" /></svg>
      </Pointer>
    </Shell>
  );
}
